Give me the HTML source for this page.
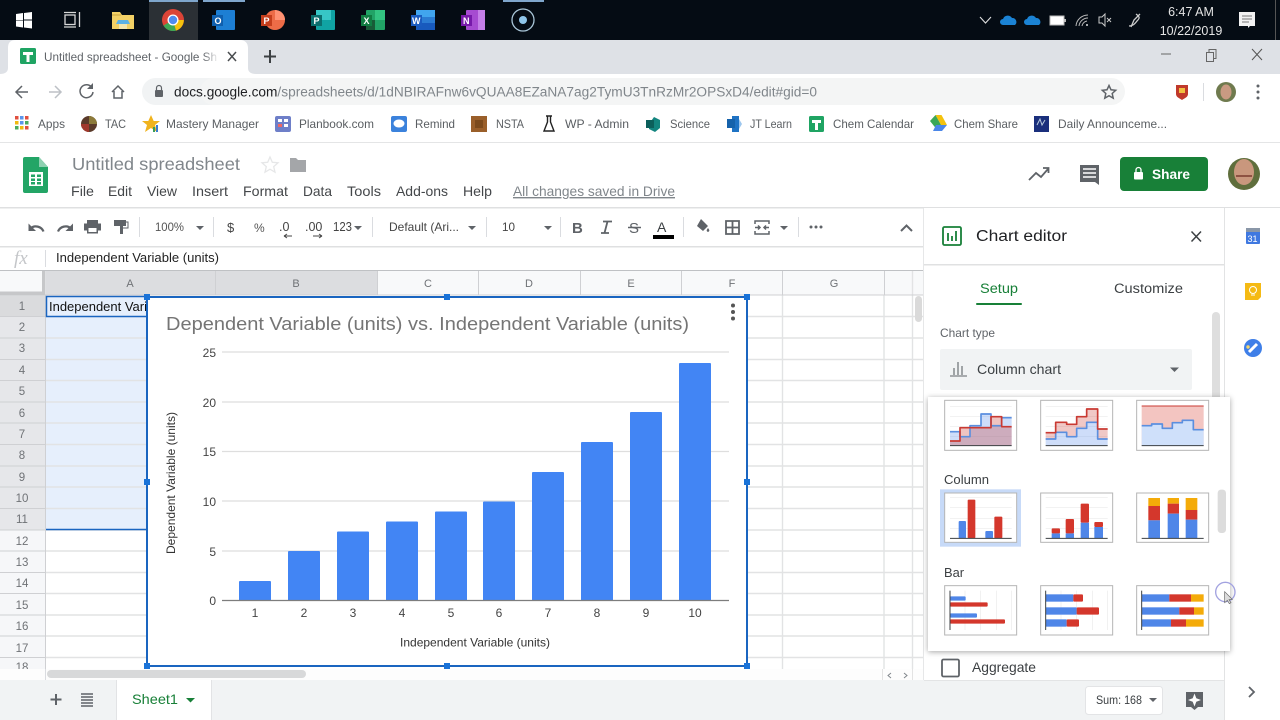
<!DOCTYPE html>
<html lang="en"><head><meta charset="utf-8"><title>Untitled spreadsheet - Google Sheets</title>
<style>
html,body{margin:0;padding:0;width:1280px;height:720px;overflow:hidden;background:#fff}
svg{display:block;position:absolute;left:0;top:0;filter:blur(.35px)}
text{font-family:"Liberation Sans",sans-serif;fill:#3c4043;font-size:13px}
#bm text{fill:#5a5e62;font-size:12px}
#menu text{fill:#44474a;font-size:14px}
.g{stroke:#e2e3e4;stroke-width:1.4}
.h{stroke:#cfd0d3;stroke-width:1}
.r{font-size:11.5px;fill:#6f7276;text-anchor:middle}
.c{font-size:11px;fill:#6f7276;text-anchor:middle}
.f{fill:#5f6368}
.t{fill:#fff;stroke:#b5b5b5;stroke-width:3}
.tg{stroke:#eaeaea;stroke-width:2}
.ax{stroke:#3c4043;stroke-width:3}
.b{fill:#4f86e8}.d{fill:#d4372c}.o{fill:#f4ab09}
.bl{fill:none;stroke:#5b8fdf;stroke-width:5;stroke-linejoin:round}.rl{fill:none;stroke:#c93a33;stroke-width:5;stroke-linejoin:round}
</style></head><body>
<svg width="1280" height="720" viewBox="0 0 1280 720">
<defs><linearGradient id="fade" x1="0" x2="1" y1="0" y2="0"><stop offset="0" stop-color="#fff" stop-opacity="0"/><stop offset="1" stop-color="#fff"/></linearGradient></defs>
<!-- taskbar -->
<rect width="1280" height="40" fill="#050c14"/>
<rect x="149" width="49" height="40" fill="#2b3035"/>
<rect x="149" width="49" height="2" fill="#7fa6cc"/><rect x="203" width="42" height="2" fill="#7fa6cc"/><rect x="503" width="41" height="2" fill="#7fa6cc"/>
<g fill="#fff"><path d="M16 14l7-1v7h-7zM24 13l8-1v7.500h-8zM16 20.500h7v7l-7-1zM24 20.500h8v8l-8-1z"/></g>
<g fill="none" stroke="#d8d8d8" stroke-width="1.300"><rect x="65" y="15" width="10" height="9.500"/><path d="M64 12.500h12M64 27h12M79.500 12v15"/></g>
<path d="M112 12h8l2 3h12v14h-22z" fill="#f3d166"/><path d="M112 15h9" stroke="#c9a23e"/><path d="M116 24h14l-2-4h-10z" fill="#5cb2e6"/><rect x="119" y="24" width="8" height="5" fill="#f3e6b0"/>
<circle cx="173" cy="20" r="11" fill="#db4437"/><path d="M173 20l-9.500 5.500A11 11 0 0 0 176 30.600z" fill="#3da855"/><path d="M173 20h10.800A11 11 0 0 1 176 30.600z" fill="#f4c20d"/><circle cx="173" cy="20" r="5.500" fill="#fff"/><circle cx="173" cy="20" r="4.200" fill="#4f8cf0"/>
<rect x="216" y="10" width="19" height="20" rx="1" fill="#1d7fd4"/><rect x="212" y="15" width="11" height="11" fill="#0f5fae"/><text x="214.500" y="24" style="font-size:9px;fill:#fff;font-weight:bold">O</text>
<circle cx="275" cy="20" r="10" fill="#ed6c47"/><path d="M275 10a10 10 0 0 1 10 10h-10z" fill="#ff9273"/><rect x="261" y="15" width="11" height="11" fill="#c43e1c"/><text x="263.500" y="24" style="font-size:9px;fill:#fff;font-weight:bold">P</text>
<rect x="316" y="10" width="19" height="20" rx="1" fill="#10a3a3"/><rect x="316" y="10" width="15" height="10" fill="#37c6c6"/><rect x="311" y="15" width="11" height="11" fill="#0b6e6e"/><text x="313.500" y="24" style="font-size:9px;fill:#fff;font-weight:bold">P</text>
<rect x="366" y="10" width="19" height="20" rx="1" fill="#21a366"/><rect x="375" y="10" width="10" height="10" fill="#33c481"/><rect x="366" y="20" width="9" height="10" fill="#185c37"/><rect x="361" y="15" width="11" height="11" fill="#107c41"/><text x="363.500" y="24" style="font-size:9px;fill:#fff;font-weight:bold">X</text>
<rect x="416" y="10" width="19" height="20" rx="1" fill="#2b7cd3"/><rect x="416" y="10" width="19" height="7" fill="#41a5ee"/><rect x="416" y="23" width="19" height="7" fill="#185abd"/><rect x="411" y="15" width="11" height="11" fill="#1a5bbf"/><text x="412" y="24" style="font-size:9px;fill:#fff;font-weight:bold">W</text>
<rect x="466" y="10" width="19" height="20" rx="1" fill="#a64bd1"/><rect x="478" y="10" width="7" height="20" fill="#c57fe8"/><rect x="461" y="15" width="11" height="11" fill="#7719aa"/><text x="463" y="24" style="font-size:9px;fill:#fff;font-weight:bold">N</text>
<circle cx="523" cy="20" r="11" fill="none" stroke="#a9c6d8" stroke-width="1.300"/><circle cx="523" cy="20" r="4" fill="#8fc6ea"/>
<path d="M980 17l5.500 6 5.500-6" fill="none" stroke="#ddd" stroke-width="1.100"/>
<path d="M1003 25a3 3 0 0 1 0-6 5 5 0 0 1 9-1 4 4 0 0 1 3 7z" fill="#1b83d4"/><path d="M1027 25a3 3 0 0 1 0-6 5 5 0 0 1 9-1 4 4 0 0 1 3 7z" fill="#1b83d4"/>
<rect x="1050" y="16" width="14" height="9" fill="#fff" stroke="#bbb"/><rect x="1064" y="19" width="2" height="3" fill="#bbb"/>
<path d="M1076 26a12 12 0 0 1 12-11M1079 26a9 9 0 0 1 9-8M1082 26a6 6 0 0 1 5-5" fill="none" stroke="#bbb"/><circle cx="1087" cy="25" r="1" fill="#ddd"/>
<path d="M1099 17h3l3-3v12l-3-3h-3z" fill="none" stroke="#ccc"/><path d="M1107 18l4 4M1111 18l-4 4" stroke="#ccc"/>
<path d="M1131 27l3-7 6-6M1136 14c4 3 4 4 1 7-3 4-5 5-8 5" fill="none" stroke="#ccc" stroke-width="1.300"/>
<text x="1191" y="16" text-anchor="middle" style="font-size:12.500px;fill:#e4e4e4">6:47 AM</text>
<text x="1191" y="35" text-anchor="middle" style="font-size:12.500px;fill:#e4e4e4">10/22/2019</text>
<path d="M1239 12h16v14h-5l-2 2v-2h-9z" fill="#f2f2f2"/><path d="M1242 16h10M1242 19h10M1242 22h7" stroke="#777"/>
<rect x="1275" y="0" width="1" height="40" fill="#555"/>
<!-- tab strip -->
<rect y="40" width="1280" height="34" fill="#dee1e6"/>
<path d="M0 74c5 0 8-2 8-6V48c0-5 2-8 8-8h224c5 0 8 3 8 8v20c0 4 3 6 8 6z" fill="#fff"/>
<rect x="20" y="48" width="16" height="16" rx="1.500" fill="#1fa463"/><path d="M23 52h10v3h-3.500v7h-3v-7H23z" fill="#fff"/>
<text x="44" y="61" textLength="173" lengthAdjust="spacingAndGlyphs" style="font-size:12px;fill:#5f6368">Untitled spreadsheet - Google Sh</text>
<rect x="203" y="47" width="16" height="18" fill="url(#fade)"/>
<path d="M228 52l8 9M236 52l-8 9" stroke="#4a4d50" stroke-width="1.500"/>
<path d="M270 50v13M264 56.500h12" stroke="#3c4043" stroke-width="2"/>
<path d="M1161 54h10" stroke="#666"/><rect x="1206.500" y="52.500" width="7" height="9" fill="none" stroke="#666"/><path d="M1209 52v-2.500h7v9h-2.500" fill="none" stroke="#666"/><path d="M1252 49l10 11M1262 49l-10 11" stroke="#555"/>
<!-- omnibox -->
<rect y="74" width="1280" height="68" fill="#fff"/>
<path d="M28 92H16m6-6l-6 6 6 6" fill="none" stroke="#5f6368" stroke-width="1.500"/>
<path d="M61 92H49m6-6l6 6-6 6" fill="none" stroke="#bdc1c6" stroke-width="1.500"/>
<path d="M91.500 87a6.500 6.500 0 1 0 1.500 5" fill="none" stroke="#5f6368" stroke-width="1.500"/><path d="M93 83v6h-6z" class="f"/>
<path d="M112 92l6-6 6 6M114 91v7h8v-7" fill="none" stroke="#5f6368" stroke-width="1.500"/>
<rect x="142" y="78" width="345" height="27" rx="13.500" fill="#f1f3f4"/><rect x="200" y="78" width="925" height="27" rx="13.500" fill="#f4f5f5"/>
<rect x="155" y="90" width="8" height="7" rx="1" fill="#5f6368"/><path d="M156.500 90v-2a2.500 2.500 0 0 1 5 0v2" fill="none" stroke="#5f6368" stroke-width="1.200"/>
<text x="174" y="96.500" textLength="643" lengthAdjust="spacingAndGlyphs" style="font-size:13.500px;fill:#80868b"><tspan style="fill:#202124">docs.google.com</tspan>/spreadsheets/d/1dNBIRAFnw6vQUAA8EZaNA7ag2TymU3TnRzMr2OPSxD4/edit#gid=0</text>
<path d="M1109 85.500l2 4.300 4.700.500-3.500 3.200 1 4.600-4.200-2.400-4.200 2.400 1-4.600-3.500-3.200 4.700-.500z" fill="none" stroke="#5f6368" stroke-width="1.500"/>
<path d="M1176 85h12v9c0 3-3 4-6 6-3-2-6-3-6-6z" fill="#c0392b"/><rect x="1179" y="88" width="6" height="5" fill="#f0c040"/>
<rect x="1203" y="83" width="1" height="18" fill="#dadce0"/>
<circle cx="1226" cy="92" r="10" fill="#6f7a4e"/><ellipse cx="1226" cy="92" rx="5.500" ry="7.500" fill="#c99a82"/><circle cx="1258" cy="86" r="1.500" class="f"/><circle cx="1258" cy="92" r="1.500" class="f"/><circle cx="1258" cy="98" r="1.500" class="f"/>
<!-- bookmarks -->
<g>
<g fill="#e0503f"><rect x="15" y="116" width="3.500" height="3.500"/><rect x="20" y="116" width="3.500" height="3.500" fill="#5a95ea"/><rect x="25" y="116" width="3.500" height="3.500"/></g>
<g><rect x="15" y="121" width="3.500" height="3.500" fill="#f1b90f"/><rect x="20" y="121" width="3.500" height="3.500" fill="#5a95ea"/><rect x="25" y="121" width="3.500" height="3.500" fill="#4aab5e"/><rect x="15" y="126" width="3.500" height="3.500" fill="#4aab5e"/><rect x="20" y="126" width="3.500" height="3.500" fill="#f1b90f"/><rect x="25" y="126" width="3.500" height="3.500" fill="#e0503f"/></g>
<circle cx="89" cy="124" r="8" fill="#5a3a2a"/><path d="M89 116a8 8 0 0 1 8 8h-8z" fill="#8c7a3a"/><path d="M89 124h-8a8 8 0 0 0 8 8z" fill="#a0382c"/>
<path d="M151 115l2.700 6h6.300l-5 4 2 7-6-4-6 4 2-7-5-4h6.300z" fill="#f0b31e"/><rect x="153" y="127" width="2" height="5" fill="#3a9d5a"/><rect x="156" y="125" width="2" height="7" fill="#3a7dd0"/>
<rect x="275" y="116" width="16" height="16" rx="2" fill="#6e7fc8"/><rect x="278" y="119" width="4" height="3" fill="#fff"/><rect x="284" y="119" width="4" height="3" fill="#fff"/><rect x="278" y="124" width="4" height="3" fill="#e66"/><rect x="284" y="124" width="4" height="3" fill="#fff"/>
<rect x="391" y="116" width="16" height="16" rx="2" fill="#3b82dc"/><ellipse cx="399" cy="123.500" rx="5.500" ry="4" fill="#fff"/>
<rect x="471" y="116" width="16" height="16" fill="#9a5f2a"/><rect x="475" y="120" width="8" height="8" fill="#7c4a1c"/>
<path d="M546 116h6M547.500 116v6l-3.500 9h10l-3.500-9v-6" fill="none" stroke="#222" stroke-width="1.400"/>
<path d="M649 124l5-7 6 3v8l-5 4-6-3z" fill="#13857f"/><rect x="646" y="120" width="8" height="8" fill="#0c5f5b"/>
<path d="M732 116h7v16h-7z" fill="#1f73c4"/><path d="M739 119l3 5-3 5z" fill="#9cc6ee"/><rect x="727" y="119" width="8" height="9" fill="#1562ab"/>
<rect x="809" y="116" width="15" height="16" rx="1.500" fill="#1fa463"/><path d="M812 120h9v3h-3v7h-3v-7h-3z" fill="#fff"/>
<path d="M935.500 115h6l5.500 10h-6z" fill="#f4c20d"/><path d="M935.500 115l5.500 10-3 6-8-10z" fill="#3aa757" /><path d="M933 131h9l5-6h-11z" fill="#4a86e8"/>
<rect x="1034" y="116" width="15" height="16" fill="#1a2f7c"/><path d="M1037 125l3-6 2 6 3-5" stroke="#bcd" fill="none"/>
</g>
<g id="bm">
<text x="38" y="128" textLength="27" lengthAdjust="spacingAndGlyphs">Apps</text>
<text x="105" y="128" textLength="21" lengthAdjust="spacingAndGlyphs">TAC</text>
<text x="166" y="128" textLength="93" lengthAdjust="spacingAndGlyphs">Mastery Manager</text>
<text x="299" y="128" textLength="75" lengthAdjust="spacingAndGlyphs">Planbook.com</text>
<text x="415" y="128" textLength="40" lengthAdjust="spacingAndGlyphs">Remind</text>
<text x="496" y="128" textLength="28" lengthAdjust="spacingAndGlyphs">NSTA</text>
<text x="565" y="128" textLength="64" lengthAdjust="spacingAndGlyphs">WP - Admin</text>
<text x="670" y="128" textLength="40" lengthAdjust="spacingAndGlyphs">Science</text>
<text x="750" y="128" textLength="42" lengthAdjust="spacingAndGlyphs">JT Learn</text>
<text x="833" y="128" textLength="81" lengthAdjust="spacingAndGlyphs">Chem Calendar</text>
<text x="954" y="128" textLength="64" lengthAdjust="spacingAndGlyphs">Chem Share</text>
<text x="1058" y="128" textLength="109" lengthAdjust="spacingAndGlyphs">Daily Announceme...</text>
</g>
<rect y="142" width="1280" height="1" fill="#e4e5e6"/>
<!-- sheets header -->
<path d="M25 157h14l9 10v24a2 2 0 0 1-2 2H25a2 2 0 0 1-2-2v-32a2 2 0 0 1 2-2z" fill="#23a566"/><path d="M39 157l9 10h-9z" fill="#8ed1b1"/>
<path d="M29 172h14v14H29z" fill="#fff"/><path d="M31 174.500h4v2.500h-4zM37 174.500h4v2.500h-4zM31 178.500h4v2.500h-4zM37 178.500h4v2.500h-4zM31 182h4v2.500h-4zM37 182h4v2.500h-4z" fill="#23a566"/>
<text x="72" y="170" textLength="168" lengthAdjust="spacingAndGlyphs" style="font-size:17.500px;fill:#80868b">Untitled spreadsheet</text>
<path d="M270 157l2.300 5.300 5.700.500-4.300 3.800 1.300 5.600-5-3-5 3 1.300-5.600-4.300-3.800 5.700-.500z" fill="none" stroke="#e6e7e8" stroke-width="1.300"/>
<path d="M290 158h6l2 2h8v12h-16z" fill="#a4a6a9"/>
<g id="menu">
<text x="71" y="196" textLength="23" lengthAdjust="spacingAndGlyphs">File</text>
<text x="108" y="196" textLength="24" lengthAdjust="spacingAndGlyphs">Edit</text>
<text x="147" y="196" textLength="30" lengthAdjust="spacingAndGlyphs">View</text>
<text x="192" y="196" textLength="36" lengthAdjust="spacingAndGlyphs">Insert</text>
<text x="243" y="196" textLength="45" lengthAdjust="spacingAndGlyphs">Format</text>
<text x="303" y="196" textLength="29" lengthAdjust="spacingAndGlyphs">Data</text>
<text x="347" y="196" textLength="34" lengthAdjust="spacingAndGlyphs">Tools</text>
<text x="396" y="196" textLength="52" lengthAdjust="spacingAndGlyphs">Add-ons</text>
<text x="463" y="196" textLength="29" lengthAdjust="spacingAndGlyphs">Help</text>
</g>
<text x="513" y="196" textLength="162" lengthAdjust="spacingAndGlyphs" style="font-size:14px;fill:#80868b;text-decoration:underline">All changes saved in Drive</text>
<path d="M1029 180l7-7 5 4 7-8M1043 168h5.500v5" fill="none" stroke="#5f6368" stroke-width="1.800"/>
<path d="M1080 165h19v20l-4-3h-15z" fill="#5f6368"/><path d="M1083 169h13M1083 173h13M1083 177h13" stroke="#fff" stroke-width="1.500"/>
<rect x="1120" y="157" width="88" height="34" rx="4" fill="#188038"/>
<rect x="1134" y="172" width="9" height="7.500" rx="1" fill="#fff"/><path d="M1136 172v-2a2.500 2.500 0 0 1 5 0v2" fill="none" stroke="#fff" stroke-width="1.300"/>
<text x="1152" y="179" textLength="38" lengthAdjust="spacingAndGlyphs" style="font-size:14px;fill:#fff;font-weight:bold">Share</text>
<circle cx="1244" cy="174" r="16" fill="#5f6e3c"/><ellipse cx="1244" cy="172" rx="10" ry="13" fill="#c9977d"/><path d="M1236 176h16" stroke="#7b3a2e" stroke-width="1.500"/>
<rect y="207" width="1280" height="1.500" fill="#dfe0e1"/>
<!-- toolbar -->
<path d="M43.500 231.500c-2-5-9-7-13-3" fill="none" stroke="#5f6368" stroke-width="2.200"/><path d="M28.500 223.500v7.500h7.500z" class="f"/>
<path d="M58 231.500c2-5 9-7 13-3" fill="none" stroke="#5f6368" stroke-width="2.200"/><path d="M73 223.500v7.500h-7.500z" class="f"/>
<path d="M87 220h11v3.500h3v7h-3v3H87v-3h-3v-7h3z" fill="#5f6368"/><rect x="88.500" y="228" width="8" height="4" fill="#fff"/>
<path d="M114 220h12v6h-12zM120 226h3v8h-3z" fill="#5f6368"/><path d="M126 222h2v6h-6" fill="none" stroke="#5f6368"/>
<g fill="#dadce0"><rect x="139" y="217" width="1" height="20"/><rect x="213" y="217" width="1" height="20"/><rect x="372" y="217" width="1" height="20"/><rect x="486" y="217" width="1" height="20"/><rect x="560" y="217" width="1" height="20"/><rect x="683" y="217" width="1" height="20"/><rect x="798" y="217" width="1" height="20"/></g>
<text x="155" y="231" textLength="29" lengthAdjust="spacingAndGlyphs" style="font-size:12px;fill:#555">100%</text>
<text x="227" y="232" style="font-size:13px;fill:#444">$</text>
<text x="254" y="232" style="font-size:12px;fill:#555">%</text>
<text x="279" y="231" style="font-size:12.500px;fill:#444">.0</text>
<text x="305" y="231" style="font-size:12.500px;fill:#444">.00</text>
<text x="333" y="231" textLength="19" lengthAdjust="spacingAndGlyphs" style="font-size:12.500px;fill:#444">123</text>
<text x="389" y="231" textLength="70" lengthAdjust="spacingAndGlyphs" style="font-size:12px;fill:#444">Default (Ari...</text>
<text x="502" y="231" textLength="13" lengthAdjust="spacingAndGlyphs" style="font-size:12px;fill:#444">10</text>
<text x="572" y="233" style="font-size:15px;font-weight:bold;fill:#5f6368">B</text>
<path d="M603 221.500h9M601 233h8M607.500 221.500l-3 11.500" fill="none" stroke="#5f6368" stroke-width="1.800"/>
<text x="629" y="233" style="font-size:15px;fill:#5f6368">S</text>
<text x="657" y="232" style="font-size:14px;fill:#3c4043">A</text>
<path d="M628 227.500h13" stroke="#5f6368" stroke-width="1.500"/>
<rect x="653" y="235" width="21" height="4" fill="#000"/>
<path d="M284 236h8M284 236l3-2M284 236l3 2" stroke="#444" fill="none"/><path d="M313 236h9M322 236l-3-2M322 236l-3 2" stroke="#444" fill="none"/>
<g fill="#5f6368"><path d="M196 226h8l-4 4z"/><path d="M354 226h8l-4 4z"/><path d="M468 226h8l-4 4z"/><path d="M544 226h8l-4 4z"/><path d="M780 226h8l-4 4z"/></g>
<path d="M701 219l7 7-5 5-6-5zM695 226h13" fill="#5f6368"/><path d="M708 228c1.500 2 2 3 0 4-2-1-1.500-2 0-4z" fill="#5f6368"/>
<path d="M726 221h13v13h-13zM732.500 221v13M726 227.500h13" fill="none" stroke="#5f6368" stroke-width="1.800"/>
<path d="M755 224v-3h14v3M755 231v3h14v-3M755 227.500h5M764 227.500h5M758 225.500l2 2-2 2M766 225.500l-2 2 2 2" fill="none" stroke="#5f6368" stroke-width="1.500"/>
<circle cx="811" cy="227" r="1.500" class="f"/><circle cx="816" cy="227" r="1.500" class="f"/><circle cx="821" cy="227" r="1.500" class="f"/>
<path d="M901 231l5.500-5.500 5.500 5.500" fill="none" stroke="#5f6368" stroke-width="2"/>
<rect y="246" width="924" height="1.500" fill="#dfe0e1"/>
<!-- formula bar -->
<text x="14" y="264" style="font-family:'Liberation Serif',serif;font-style:italic;font-size:19px;fill:#c4c6c9">fx</text>
<rect x="45" y="250" width="1" height="17" fill="#dadce0"/>
<text x="56" y="262" textLength="163" lengthAdjust="spacingAndGlyphs" style="font-size:13px;fill:#222">Independent Variable (units)</text>
<rect y="270" width="924" height="1.500" fill="#bfc1c4"/>
<!-- grid -->
<rect y="271" width="924" height="398" fill="#fff"/>
<rect y="271" width="46" height="24" fill="#f8f9fa"/>
<rect x="46" y="271" width="331" height="24" fill="#dcdde0"/>
<rect x="377" y="271" width="547" height="24" fill="#f8f9fa"/>
<rect y="295" width="45" height="235" fill="#e6e7ea"/>
<rect y="295" width="45" height="21" fill="#dadbdd"/>
<rect y="530" width="45" height="139" fill="#f6f7f9"/>
<rect x="46" y="296" width="101" height="234" fill="#e6effc"/>
<g class="g">
<path d="M46 338h878M46 359.500h878M46 380.500h878M46 402h878M46 423h878M46 444.500h878M46 466h878M46 487h878M46 508.500h878M46 551h878M46 572.500h878M46 593.500h878M46 615h878M46 636h878M46 657.500h878M46 316.500h878M46 530h878"/>
<path d="M782.500 295v374M884 295v374M912.500 271v398"/>
</g>
<g class="h">
<path d="M0 295h924M45.500 295v374M215.500 271v24M377.500 271v24M478.500 271v24M580.500 271v24M681.500 271v24M782.500 271v24M884.500 271v24"/>
<path d="M0 316.500h45M0 338h45M0 359.500h45M0 380.500h45M0 402h45M0 423h45M0 444.500h45M0 466h45M0 487h45M0 508.500h45M0 530h45M0 551h45M0 572.500h45M0 593.500h45M0 615h45M0 636h45M0 657.500h45"/>
</g>
<rect x="42" y="271" width="3.500" height="24" fill="#c6c7c9"/><rect x="0" y="291.500" width="45" height="3.500" fill="#c6c7c9"/>
<g>
<text class="c" x="130" y="287">A</text><text class="c" x="296" y="287">B</text><text class="c" x="428" y="287">C</text><text class="c" x="529" y="287">D</text><text class="c" x="631" y="287">E</text><text class="c" x="732" y="287">F</text><text class="c" x="834" y="287">G</text>
<text class="r" x="22" y="310">1</text><text class="r" x="22" y="331">2</text><text class="r" x="22" y="352">3</text><text class="r" x="22" y="374">4</text><text class="r" x="22" y="395">5</text><text class="r" x="22" y="417">6</text><text class="r" x="22" y="438">7</text><text class="r" x="22" y="459">8</text><text class="r" x="22" y="481">9</text><text class="r" x="22" y="502">10</text><text class="r" x="22" y="523">11</text><text class="r" x="22" y="545">12</text><text class="r" x="22" y="566">13</text><text class="r" x="22" y="587">14</text><text class="r" x="22" y="609">15</text><text class="r" x="22" y="630">16</text><text class="r" x="22" y="652">17</text><text class="r" x="22" y="671">18</text>
</g>
<rect x="46.500" y="296.500" width="101" height="20" fill="#e6effc" stroke="#1a65c0" stroke-width="1.500"/>
<text x="49" y="311" textLength="98" lengthAdjust="spacingAndGlyphs" style="font-size:13px;fill:#111">Independent Vari</text>
<path d="M46 529.500h101" stroke="#1a65c0" stroke-width="1.500"/>
<!-- chart -->
<rect x="147" y="297" width="600" height="369" fill="#fff" stroke="#1a65c0" stroke-width="2"/>
<g fill="#1a73d8"><rect x="144" y="294" width="6" height="6"/><rect x="444" y="294" width="6" height="6"/><rect x="744" y="294" width="6" height="6"/><rect x="144" y="479" width="6" height="6"/><rect x="744" y="479" width="6" height="6"/><rect x="144" y="663" width="6" height="6"/><rect x="444" y="663" width="6" height="6"/><rect x="744" y="663" width="6" height="6"/></g>
<text x="166" y="330" textLength="523" lengthAdjust="spacingAndGlyphs" style="font-size:18px;fill:#757575">Dependent Variable (units) vs. Independent Variable (units)</text>
<circle cx="733" cy="305.500" r="2" fill="#555"/><circle cx="733" cy="312" r="2" fill="#555"/><circle cx="733" cy="318.500" r="2" fill="#555"/>
<path d="M222 352h507M222 402h507M222 451.500h507M222 501h507M222 551h507" stroke="#dedede" stroke-width="1.200"/>
<g fill="#4285f4">
<rect x="239" y="581" width="32" height="20" rx="1"/><rect x="288" y="551" width="32" height="50" rx="1"/><rect x="337" y="531.500" width="32" height="69.500" rx="1"/><rect x="386" y="521.500" width="32" height="79.500" rx="1"/><rect x="435" y="511.500" width="32" height="89.500" rx="1"/><rect x="483" y="501.500" width="32" height="99.500" rx="1"/><rect x="532" y="472" width="32" height="129" rx="1"/><rect x="581" y="442" width="32" height="159" rx="1"/><rect x="630" y="412" width="32" height="189" rx="1"/><rect x="679" y="363" width="32" height="238" rx="1"/>
</g>
<path d="M222 600.500h507" stroke="#7d7d7d" stroke-width="1.200"/>
<g text-anchor="end">
<text x="216" y="357" style="font-size:12px;fill:#444">25</text><text x="216" y="407" style="font-size:12px;fill:#444">20</text><text x="216" y="456" style="font-size:12px;fill:#444">15</text><text x="216" y="506" style="font-size:12px;fill:#444">10</text><text x="216" y="556" style="font-size:12px;fill:#444">5</text><text x="216" y="605" style="font-size:12px;fill:#444">0</text>
</g>
<g text-anchor="middle">
<text x="255" y="617" style="font-size:12px;fill:#444">1</text><text x="304" y="617" style="font-size:12px;fill:#444">2</text><text x="353" y="617" style="font-size:12px;fill:#444">3</text><text x="402" y="617" style="font-size:12px;fill:#444">4</text><text x="451" y="617" style="font-size:12px;fill:#444">5</text><text x="499" y="617" style="font-size:12px;fill:#444">6</text><text x="548" y="617" style="font-size:12px;fill:#444">7</text><text x="597" y="617" style="font-size:12px;fill:#444">8</text><text x="646" y="617" style="font-size:12px;fill:#444">9</text><text x="695" y="617" style="font-size:12px;fill:#444">10</text>
</g>
<text x="400" y="646.500" textLength="150" lengthAdjust="spacingAndGlyphs" style="font-size:12px;fill:#333">Independent Variable (units)</text>
<text transform="translate(175,554) rotate(-90)" textLength="142" lengthAdjust="spacingAndGlyphs" style="font-size:12px;fill:#333">Dependent Variable (units)</text>
<!-- grid scrollbars -->
<rect x="915" y="296" width="7" height="26" rx="3.500" fill="#dadada"/>
<rect y="669" width="924" height="11" fill="#fdfdfd"/>
<rect x="45" y="669" width="1" height="11" fill="#dadce0"/>
<rect x="47" y="670" width="259" height="8" rx="4" fill="#d8d9da"/>
<path d="M891 673l-3 2.500 3 2.500M904 673l3 2.500-3 2.500" fill="none" stroke="#80868b"/>
<rect x="882" y="669" width="1" height="11" fill="#e3e3e3"/><rect x="912" y="669" width="1" height="11" fill="#e3e3e3"/>
<!-- bottom bar -->
<rect y="680" width="1224" height="40" fill="#f1f3f4"/>
<rect x="117" y="680" width="94" height="40" fill="#fff"/><rect x="116" y="680" width="1" height="40" fill="#e2e3e5"/><rect x="211" y="680" width="1" height="40" fill="#e2e3e5"/>
<path d="M56 694v11M50.500 699.500h11" stroke="#5f6368" stroke-width="2"/>
<path d="M81 694h12M81 697h12M81 700h12M81 703h12M81 706h12" stroke="#5f6368" stroke-width="1.500"/>
<text x="132" y="704" textLength="46" lengthAdjust="spacingAndGlyphs" style="font-size:14px;fill:#188038">Sheet1</text>
<path d="M186 698h9l-4.500 4.500z" fill="#188038"/>
<!-- editor panel -->
<rect x="924" y="208" width="300" height="472" fill="#fff"/>
<rect x="923" y="208" width="1" height="472" fill="#e6e7e8"/>
<rect x="1224" y="208" width="1" height="512" fill="#e2e3e4"/>
<rect x="1225" y="208" width="55" height="512" fill="#fff"/>
<rect x="943" y="227" width="18" height="18" rx="1.500" fill="none" stroke="#188038" stroke-width="1.800"/><path d="M948 233v8M952 236v5M956 231v10" stroke="#188038" stroke-width="1.800"/>
<text x="976" y="241" textLength="91" lengthAdjust="spacingAndGlyphs" style="font-size:15.500px;fill:#202124">Chart editor</text>
<path d="M1191.500 231.500l9.500 10M1201 231.500l-9.500 10" stroke="#3c4043" stroke-width="1.500"/>
<rect x="924" y="264" width="300" height="1.500" fill="#e0e1e2"/>
<text x="980" y="293" textLength="38" lengthAdjust="spacingAndGlyphs" style="font-size:13.500px;fill:#188038">Setup</text>
<rect x="976" y="303" width="46" height="2" rx="1" fill="#188038"/>
<text x="1114" y="293" textLength="69" lengthAdjust="spacingAndGlyphs" style="font-size:13.500px;fill:#3c4043">Customize</text>
<text x="940" y="337" textLength="55" lengthAdjust="spacingAndGlyphs" style="font-size:12px;fill:#5f6368">Chart type</text>
<rect x="940" y="349" width="252" height="41" rx="2" fill="#f1f3f4"/>
<path d="M950 376h17M954 375v-7M958 375v-13M962 375v-9" stroke="#5f6368" stroke-width="1.100" fill="none"/>
<text x="977" y="374" textLength="84" lengthAdjust="spacingAndGlyphs" style="font-size:14px;fill:#3c4043">Column chart</text>
<path d="M1170 367.500h9l-4.500 4.500z" fill="#5f6368"/>
<rect x="1212" y="312" width="8" height="90" rx="4" fill="#dedede"/>
<!-- aggregate -->
<rect x="942" y="659.500" width="17" height="17" rx="1.500" fill="#fff" stroke="#5f6368" stroke-width="1.800"/>
<text x="972" y="672" textLength="64" lengthAdjust="spacingAndGlyphs" style="font-size:14px;fill:#3c4043">Aggregate</text>
<rect x="924" y="680" width="300" height="40" fill="#f1f3f4"/><rect x="924" y="680" width="300" height="1" fill="#e3e4e5"/>
<rect x="1085.500" y="686.500" width="77" height="28" rx="3" fill="#fff" stroke="#e3e4e6"/>
<text x="1096" y="704" textLength="46" lengthAdjust="spacingAndGlyphs" style="font-size:11.500px;fill:#3c4043">Sum: 168</text>
<path d="M1149 698h8l-4 4z" fill="#5f6368"/>
<path d="M1186 692h17v15h-5l-3.500 3-3.500-3h-5z" fill="#5f6368"/><path d="M1194.500 693.500l1.800 4.700 4.700 1.800-4.700 1.800-1.800 4.700-1.800-4.700-4.700-1.800 4.700-1.800z" fill="#fff"/>
<path d="M1249 687l5 5-5 5" fill="none" stroke="#5f6368" stroke-width="1.800"/>
<!-- side icons -->
<rect x="1246" y="230" width="14" height="14" rx="1" fill="#3f78e0"/><rect x="1246" y="228" width="14" height="4" fill="#8a97a8"/><text x="1247.500" y="242" style="font-size:9px;fill:#fff">31</text>
<path d="M1245 283h16v14l-3 3h-13z" fill="#f5ba14"/><circle cx="1253" cy="290" r="3.500" fill="none" stroke="#fff"/><path d="M1251 295h4" stroke="#fff"/>
<circle cx="1253" cy="348" r="9" fill="#3f7fe8"/><path d="M1249 352l8-8" stroke="#fff" stroke-width="3"/><circle cx="1248" cy="347" r="1.700" fill="#f5d76e"/>
<!-- chart type popup -->
<rect x="928" y="397" width="302" height="254" fill="#fff" style="filter:drop-shadow(0 1px 3px rgba(0,0,0,.35))"/>
<text x="944" y="484" textLength="45" lengthAdjust="spacingAndGlyphs" style="font-size:12.500px;fill:#3c4043">Column</text>
<text x="944" y="577" textLength="20" lengthAdjust="spacingAndGlyphs" style="font-size:12.500px;fill:#3c4043">Bar</text>
<g transform="translate(925,395) scale(.33333)">
<rect x="45" y="283" width="243" height="172" fill="#c7daf8"/>
<g class="t">
<rect x="59" y="16" width="216" height="150"/><rect x="347" y="16" width="216" height="150"/><rect x="635" y="16" width="216" height="150"/>
<rect x="59" y="294" width="216" height="148"/><rect x="347" y="294" width="216" height="148"/><rect x="635" y="294" width="216" height="148"/>
<rect x="59" y="572" width="216" height="148"/><rect x="347" y="572" width="216" height="148"/><rect x="635" y="572" width="216" height="148"/>
</g>
<g class="tg"><path d="M75 35h185M75 65h185M75 95h185M75 125h185M362 35h186M362 65h186M362 95h186M362 125h186M75 308h185M75 338h185M75 370h185M75 400h185M362 308h186M362 338h186M362 370h186M362 400h186M120 587v118M167 587v118M214 587v118M260 587v118M408 587v118M455 587v118M502 587v118M548 587v118"/></g>
<!-- stepped -->
<path d="M75 110H105V125H135V92H168V57H198V92H230V68H260V152H75z" fill="#4f86e8" fill-opacity=".28"/>
<path d="M75 138H105V98H168V98H198V65H230V95H260V152H75z" fill="#c93a33" fill-opacity=".3"/>
<path class="bl" d="M75 110H105V125H135V92H168V57H198V92H230V68H260"/><path class="rl" d="M75 138H105V98H168V98H198V65H230V95H260"/>
<path class="ax" d="M75 152H260"/>
<path d="M362 132H392V112H425V125H455V100H485V82H518V132H548V152H362z" fill="#4f86e8" fill-opacity=".28"/>
<path d="M362 113H392V82H425V88H455V65H485V42H518V102H548V132H518V82H485V100H455V125H425V112H392V132H362z" fill="#c93a33" fill-opacity=".28"/>
<path class="bl" d="M362 132H392V112H425V125H455V100H485V82H518V132H548"/><path class="rl" d="M362 113H392V82H425V88H455V65H485V42H518V102H548"/>
<path class="ax" d="M362 152H548"/>
<rect x="650" y="33" width="186" height="119" fill="#f3c5c1"/>
<path d="M650 92H680V87H712V100H742V83H772V76H805V104H836V152H650z" fill="#cfe0fa"/>
<path class="bl" d="M650 92H680V87H712V100H742V83H772V76H805V104H836"/><path d="M650 33H836" stroke="#c93a33" stroke-width="3"/>
<path class="ax" d="M650 152H836"/>
<!-- columns -->
<rect class="b" x="101" y="378" width="22" height="52" rx="3"/><rect class="d" x="128" y="314" width="23" height="116" rx="3"/><rect class="b" x="181" y="408" width="23" height="22" rx="3"/><rect class="d" x="208" y="365" width="24" height="65" rx="3"/>
<path class="ax" d="M75 430H260"/>
<rect class="b" x="380" y="415" width="25" height="15"/><rect class="d" x="380" y="400" width="25" height="15" rx="3"/>
<rect class="b" x="422" y="415" width="25" height="15"/><rect class="d" x="422" y="372" width="25" height="43" rx="3"/>
<rect class="b" x="467" y="383" width="25" height="47"/><rect class="d" x="467" y="326" width="25" height="57" rx="3"/>
<rect class="b" x="508" y="396" width="26" height="34"/><rect class="d" x="508" y="381" width="26" height="15" rx="3"/>
<path class="ax" d="M362 430H548"/>
<rect class="o" x="670" y="309" width="35" height="24"/><rect class="d" x="670" y="333" width="35" height="43"/><rect class="b" x="670" y="376" width="35" height="54"/>
<rect class="o" x="728" y="309" width="34" height="17"/><rect class="d" x="728" y="326" width="34" height="30"/><rect class="b" x="728" y="356" width="34" height="74"/>
<rect class="o" x="782" y="309" width="35" height="36"/><rect class="d" x="782" y="345" width="35" height="29"/><rect class="b" x="782" y="374" width="35" height="56"/>
<path class="ax" d="M650 430H836"/>
<!-- bars -->
<rect class="b" x="75" y="604" width="47" height="13" rx="3"/><rect class="d" x="75" y="622" width="113" height="13" rx="3"/><rect class="b" x="75" y="655" width="81" height="13" rx="3"/><rect class="d" x="75" y="673" width="165" height="13" rx="3"/>
<path class="ax" d="M75 587V705"/>
<rect class="b" x="362" y="598" width="83" height="22"/><rect class="d" x="445" y="598" width="29" height="22" rx="3"/>
<rect class="b" x="362" y="637" width="93" height="22"/><rect class="d" x="455" y="637" width="67" height="22" rx="3"/>
<rect class="b" x="362" y="673" width="63" height="22"/><rect class="d" x="425" y="673" width="37" height="22" rx="3"/>
<path class="ax" d="M362 587V705"/>
<rect class="b" x="650" y="598" width="83" height="22"/><rect class="d" x="733" y="598" width="65" height="22"/><rect class="o" x="798" y="598" width="38" height="22"/>
<rect class="b" x="650" y="637" width="113" height="22"/><rect class="d" x="763" y="637" width="44" height="22"/><rect class="o" x="807" y="637" width="29" height="22"/>
<rect class="b" x="650" y="673" width="88" height="22"/><rect class="d" x="738" y="673" width="45" height="22"/><rect class="o" x="783" y="673" width="53" height="22"/>
<path class="ax" d="M650 587V705"/>
<!-- popup scrollbar -->
<rect x="878" y="284" width="25" height="130" rx="10" fill="#dcdcdc"/>
<!-- cursor -->
<circle cx="901" cy="591" r="29" fill="none" stroke="#a2a2e0" stroke-width="4"/>
<path d="M899 590v33l8-7 6 10 5-3-6-9 10-1z" fill="#ddd" stroke="#666" stroke-width="2"/>
</g>
</svg>
</body></html>
